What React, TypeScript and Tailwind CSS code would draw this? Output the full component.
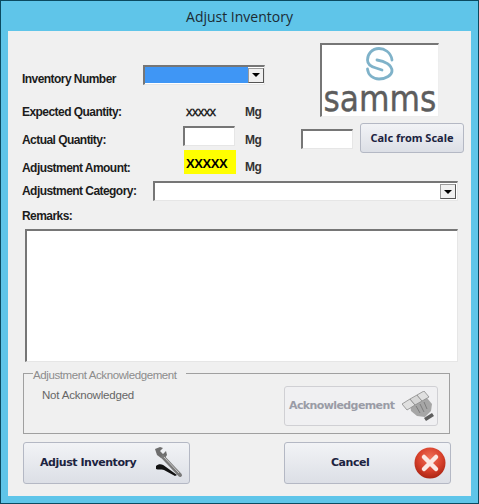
const label = "font-['Liberation_Sans',sans-serif] text-xs font-bold text-[#1c1c1c] tracking-[-0.55px]";
const unit = "font-['Liberation_Sans',sans-serif] text-xs font-bold text-[#333] tracking-[-0.6px]";
const sunken = "bg-white border border-[#e6e6e6] border-t-2 border-l-2 border-t-[#767676] border-l-[#767676]";
const btn =
  "flex items-center rounded-[3px] border border-[#b4b8c4] bg-gradient-to-b from-[#f2f3f6] to-[#dcdfe6] font-['DejaVu_Sans',sans-serif] text-[11px] font-bold tracking-[-0.45px] text-[#1c2340]";

const ComboArrow = () => (
  <div className="flex h-[15px] w-[16px] items-center justify-center border border-[#9a9a9a] bg-[#f0f0f0] border-b-[#555] border-r-[#555]">
    <div className="h-0 w-0 border-x-4 border-t-4 border-x-transparent border-t-black" />
  </div>
);

const Wrench = () => (
  <svg width="32" height="34" viewBox="0 0 32 34">
    <path d="M2 3 L7 1 L10 2 L7 5 L10 8 L13 5 L14 9 L12 12 L8 12 L4 9 Z" fill="#6e6e6e" />
    <path d="M10 11 L27 29" stroke="#7a7a7a" strokeWidth="4" strokeLinecap="round" />
    <path d="M11 11 L26 27" stroke="#c9c9c9" strokeWidth="1" />
    <path d="M3 20 C6 17 10 18 13 21 L24 29 L22 30 L11 24 C8 23 5 24 3 23 Z" fill="#111" />
  </svg>
);

const CancelIcon = () => (
  <svg width="32" height="32" viewBox="0 0 32 32">
    <defs>
      <radialGradient id="redBall" cx="50%" cy="35%" r="70%">
        <stop offset="0%" stopColor="#f0735a" />
        <stop offset="55%" stopColor="#d8412c" />
        <stop offset="100%" stopColor="#a3200f" />
      </radialGradient>
    </defs>
    <circle cx="16" cy="16" r="15.5" fill="url(#redBall)" />
    <path d="M10 10 L22 22 M22 10 L10 22" stroke="#fbe9e4" strokeWidth="4.5" strokeLinecap="round" />
  </svg>
);

const HandIcon = () => (
  <svg width="32" height="30" viewBox="0 0 32 30">
    <path d="M8 14 L17 8 L25 7 L30 13 L29 20 L23 26 L15 25 L9 20 Z" fill="#a6a6a6" />
    <path d="M0 13 L8 8 L13 14 L5 19 Z" fill="#e0e0e0" stroke="#8a8a8a" strokeWidth="0.8" />
    <path d="M8 8 L15 4 L20 10 L13 14 Z" fill="#d6d6d6" stroke="#8a8a8a" strokeWidth="0.8" />
    <path d="M15 4 L22 0 L27 6 L20 10 Z" fill="#e0e0e0" stroke="#8a8a8a" strokeWidth="0.8" />
    <path d="M14 15 L18 22 M18 13 L22 21 M22 11 L25 18" stroke="#7d7d7d" strokeWidth="1" />
    <path d="M22 27 L30 22 L32 25 L24 30 Z" fill="#5e5e5e" />
  </svg>
);

const Logo = () => (
  <div className="flex h-[74px] w-[119px] flex-col items-center border border-[#eee] border-t-2 border-l-2 border-t-[#767676] border-l-[#767676] bg-white">
    <svg width="28" height="34" viewBox="0 0 28 34" className="mt-[2px] shrink-0">
      <path d="M26 13 C25 5 18 1.5 13 1.5 C6 1.5 1.5 7 1.5 13 C1.5 18 6 20 10 21 L16 23" fill="none" stroke="#7fb2c9" strokeWidth="2.8" strokeLinecap="round" />
      <path d="M1.5 22 C2 28 7 32 13 32 C20 32 26 28 26 24 C26 18 19 14 11 13" fill="none" stroke="#7fb2c9" strokeWidth="2.8" strokeLinecap="round" />
    </svg>
    <span className="font-['DejaVu_Sans',sans-serif] scale-x-[0.87] text-[36px] leading-[36px] text-[#5d5d5d] [-webkit-text-stroke:0.4px_#5d5d5d]">samms</span>
  </div>
);

export default function App() {
  return (
    <div className="flex h-[504px] w-[479px] flex-col border border-[#0b4a60] bg-[#5fc5e9] px-[7px] pb-[7px]">
      <div className="flex h-[30px] shrink-0 items-center justify-center font-['Open_Sans',sans-serif] text-[14px] text-[#1c2b33]">
        Adjust Inventory
      </div>
      <div className="flex h-[465px] flex-col bg-[#f0f0f0] pl-[14px] font-['Liberation_Sans',sans-serif]">
        <div className="flex h-[85px] shrink-0">
          <div className="flex w-[298px] flex-col">
            <div className="mt-[34px] flex h-[19px] items-center">
              <span className={`${label} w-[121px] pt-[9px]`}>Inventory Number</span>
              <div className={`${sunken} flex h-[20px] w-[122px] items-center justify-between`}>
                <div className="h-[16px] w-[103px] bg-[#3f96f5]" />
                <ComboArrow />
              </div>
            </div>
            <div className="mt-[21px] flex h-[14px] items-center">
              <span className={`${label} w-[164px]`}>Expected Quantity:</span>
              <span className="w-[59px] font-['Liberation_Sans',sans-serif] text-[13px] tracking-[-0.6px] text-[#111] [-webkit-text-stroke:0.3px_#111]">xxxxx</span>
              <span className={unit}>Mg</span>
            </div>
          </div>
          <div className="mt-[12px]">
            <Logo />
          </div>
        </div>

        <div className="mt-[7px] flex h-[27px] shrink-0 items-start">
          <span className={`${label} mt-[9px] w-[161px]`}>Actual Quantity:</span>
          <div className={`${sunken} mt-[3px] h-[20px] w-[52px]`} />
          <span className={`${unit} ml-[10px] mt-[9px] w-[56px]`}>Mg</span>
          <div className={`${sunken} mt-[6px] h-[20px] w-[52px]`} />
          <div className={`${btn} ml-[7px] h-[30px] w-[104px] justify-center font-['Noto_Sans',sans-serif] text-[11.5px] tracking-[0px]`}>Calc from Scale</div>
        </div>

        <div className="flex h-[31px] shrink-0 items-start">
          <span className={`${label} mt-[10px] w-[162px]`}>Adjustment Amount:</span>
          <div className="flex h-[24px] w-[52px] items-center pl-[2px] pt-[3px] text-[13px] font-bold tracking-[-0.4px] text-black bg-[#ffff00]">
            XXXXX
          </div>
          <span className={`${unit} ml-[9px] mt-[9px]`}>Mg</span>
        </div>

        <div className="flex h-[20px] shrink-0 items-center">
          <span className={`${label} w-[131px]`}>Adjustment Category:</span>
          <div className={`${sunken} flex h-[20px] w-[305px] items-center justify-end pr-[1px]`}>
            <ComboArrow />
          </div>
        </div>

        <span className={`${label} mt-[7px] h-[21px] shrink-0`}>Remarks:</span>
        <div className={`${sunken} ml-[3px] h-[133px] w-[433px] shrink-0`} />

        <fieldset className="ml-px mt-[4px] h-[68px] w-[427px] shrink-0 border border-[#a0a0a0] pl-[18px] pr-[11px]">
          <legend className="ml-[-9px] translate-y-[2px] pr-[9px] font-['Liberation_Sans',sans-serif] text-[11.5px] leading-[14px] tracking-[-0.4px] text-[#8c8c8c]">
            Adjustment Acknowledgement
          </legend>
          <div className="flex justify-between pt-[6px]">
            <span className="mt-[1px] text-[11.5px] tracking-[-0.2px] text-[#666]">Not Acknowledged</span>
            <div className="flex h-[40px] w-[154px] items-center justify-between rounded-[3px] border border-[#d0d0d4] bg-[#f0f0f2] pl-[4px] pr-[3px] font-['DejaVu_Sans',sans-serif] text-[11px] font-bold tracking-[-0.6px] text-[#9a9ca6]">
              Acknowledgement
              <HandIcon />
            </div>
          </div>
        </fieldset>

        <div className="ml-px mt-[8px] flex w-[428px] shrink-0 justify-between">
          <div className={`${btn} h-[42px] w-[167px] justify-between pl-[16px] pr-[4px]`}>
            Adjust Inventory
            <Wrench />
          </div>
          <div className={`${btn} h-[42px] w-[167px] pl-[46px] pr-[4px]`}>
            <span className="flex-1">Cancel</span>
            <CancelIcon />
          </div>
        </div>
      </div>
    </div>
  );
}
